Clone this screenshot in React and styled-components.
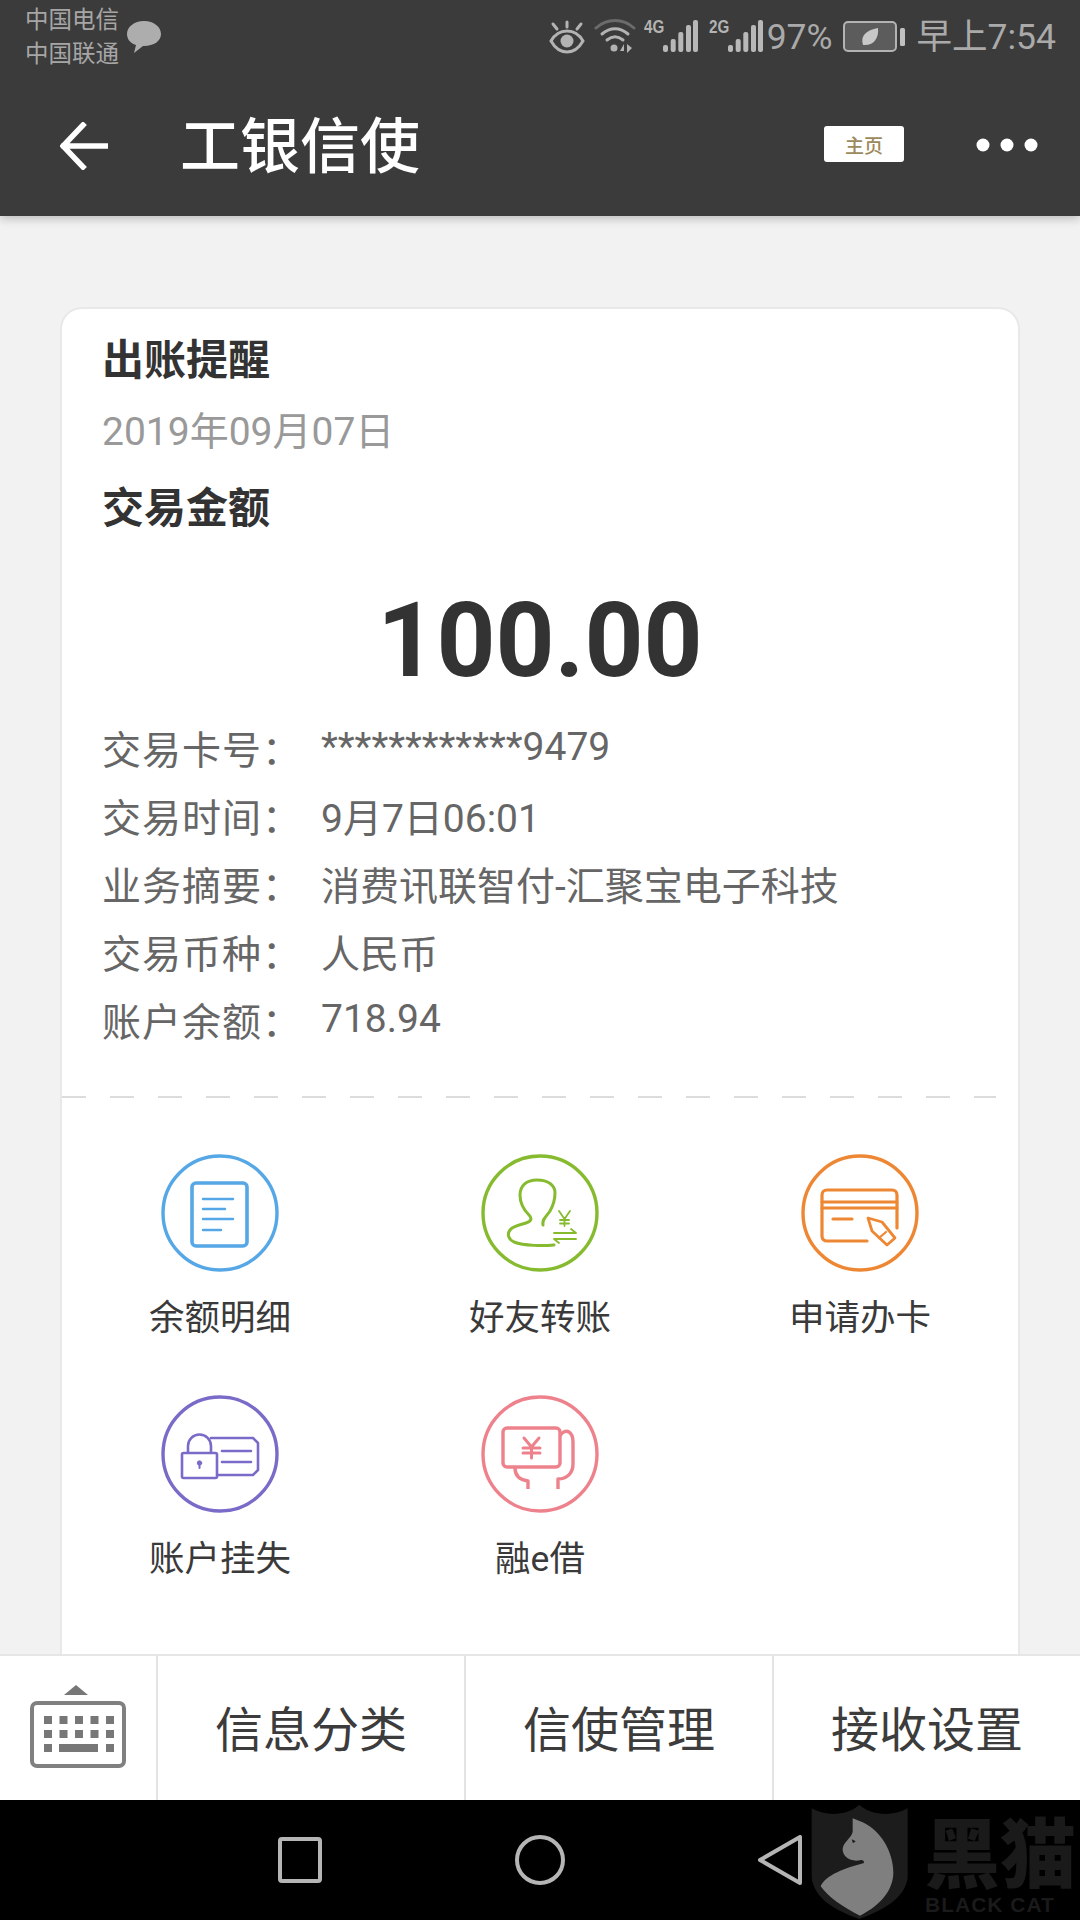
import React from 'react';
import styled, { createGlobalStyle } from 'styled-components';

const FONT = `Roboto, "Noto Sans CJK SC", sans-serif`;

const Global = createGlobalStyle`
  html, body { margin: 0; padding: 0; background: #f2f2f2; }
  * { box-sizing: border-box; }
`;

const Page = styled.div`
  width: 1080px; height: 1920px; display: flex; flex-direction: column;
  overflow: hidden; font-family: ${FONT}; background: #f2f2f2;
`;
const Top = styled.header`
  position: relative; z-index: 2; height: 216px; flex: none; background: #3b3b3b;
  box-shadow: 0 3px 9px rgba(0,0,0,.22);
`;
const StatusBar = styled.div`
  height: 76px; display: flex; align-items: flex-start; padding: 3px 24px 0 25px; color: #a9a9a9;
`;
const Carriers = styled.div`
  display: flex; flex-direction: column; font-size: 23.5px; line-height: 34px; color: #a6a6a6;
`;
const Bubble = styled.svg`
  width: 36px; height: 34px; margin: 17px 0 0 7px; flex: none;
`;
const StatusRight = styled.div`
  margin-left: auto; height: 56px; margin-top: 6px; display: flex; align-items: center;
`;
const StatusIcon = styled.svg`
  display: block; flex: none; margin-right: ${p => p.$gap || 0}px;
`;
const StatusText = styled.span`
  font-size: 35.5px; line-height: 56px; margin-right: ${p => p.$gap || 0}px; color: #aaa; white-space: nowrap;
`;
const Toolbar = styled.div`
  height: 140px; display: flex; align-items: center; padding: 0 42px 0 60px;
`;
const Title = styled.h1`
  margin: 4px 0 0 72px; font-size: 60px; line-height: 80px; font-weight: 500; color: #fff; flex: 1;
`;
const HomeButton = styled.div`
  width: 80px; height: 36px; background: #fff; border-radius: 3px; color: #9c8a5e; font-size: 19px; font-weight: 500;
  display: flex; align-items: center; justify-content: center; margin: 0 72px 4px 0;
`;
const MoreDots = styled.svg`
  display: block; flex: none; margin-bottom: 2px;
`;
const Main = styled.main`
  flex: 1; min-height: 0; overflow: hidden; padding: 91px 61px 0;
`;
const Card = styled.section`
  background: #fff; border: 2px solid #e8e8e8; border-bottom: 0; border-radius: 22px 22px 0 0;
  height: 1400px; margin: 0 -1px;
`;
const CardHead = styled.div`
  padding: 17px 0 0 40px;
`;
const CardTitle = styled.div`
  font-size: 42px; line-height: 70px; font-weight: 700; color: #333; margin-top: ${p => p.$offset || 0}px;
`;
const DateText = styled.div`
  font-size: 39px; line-height: 72px; color: #999;
`;
const Amount = styled.div`
  text-align: center; font-size: 103px; line-height: 145px; font-weight: 700; color: #333; margin-top: 24px;
`;
const Rows = styled.dl`
  margin: 0; padding: 0 0 0 40px;
`;
const Row = styled.div`
  display: grid; grid-template-columns: 219px 1fr; height: 68px; align-items: center;
  font-size: 39px; color: #666;
`;
const Label = styled.dt`
  letter-spacing: 1px;
`;
const Value = styled.dd`
  margin: 0;
`;
const Dashed = styled.svg`
  display: block; width: 954px; height: 4px; margin-top: 42px;
`;
const Grid = styled.div`
  display: grid; grid-template-columns: repeat(3, 1fr); grid-auto-rows: 241px; padding-top: 55px; margin: 0 -2px;
`;
const Item = styled.div`
  display: flex; flex-direction: column; align-items: center;
`;
const ItemIcon = styled.svg`
  width: 118px; height: 118px; display: block;
`;
const ItemLabel = styled.div`
  font-size: 35.5px; line-height: 50px; margin-top: 21px; color: #3a3a3a;
`;
const BottomBar = styled.nav`
  height: 146px; flex: none; background: #fff; border-top: 2px solid #e6e6e6; display: grid;
  grid-template-columns: 158px 308px 308px 306px; position: relative; z-index: 1;
`;
const BarCell = styled.div`
  display: flex; align-items: center; justify-content: center; font-size: 48px; color: #3c3c3c; padding-bottom: 5px;
  border-right: ${p => p.$last ? 0 : '2px solid #e3e3e3'};
`;
const SystemNav = styled.div`
  position: relative; height: 120px; flex: none; background: #000; display: grid;
  grid-template-columns: repeat(3, 240px); justify-content: center; align-items: center; justify-items: center;
`;
const Watermark = styled.div`
  position: absolute; left: 800px; top: 0; width: 280px; height: 120px;
`;
const WatermarkName = styled.div`
  position: absolute; left: 124px; top: 8px; font-size: 76px; line-height: 82px; font-weight: 900;
  color: #1a1a1a; white-space: nowrap;
  font-family: "Noto Sans CJK SC", sans-serif;
`;
const WatermarkSub = styled.div`
  position: absolute; left: 125px; top: 93px; font-size: 21px; line-height: 24px; font-weight: 700;
  color: #1a1a1a; letter-spacing: 1px; white-space: nowrap; font-family: "Liberation Sans", sans-serif;
`;
const SignalLabel = styled.span`
  position: absolute; left: 0; top: 0; font-size: 19px; line-height: 20px; font-weight: 700; color: #b3b3b3;
  font-family: "Liberation Sans", sans-serif; transform: scaleX(.8); transform-origin: left;
`;
const SignalWrap = styled.div`
  position: relative; width: 54px; height: 40px; flex: none; margin-right: ${p => p.$gap}px;
`;

const Icon = ({ color, children }) => (
  <ItemIcon viewBox="0 0 118 118" fill="none" stroke={color} strokeWidth="2.6" strokeLinecap="round" strokeLinejoin="round">
    <circle cx="59" cy="59" r="57" strokeWidth="3.4" />
    {children}
  </ItemIcon>
);

function SignalIcon({ label, gap }) {
  return (
    <SignalWrap $gap={gap}>
      <SignalLabel>{label}</SignalLabel>
      <svg width="54" height="40" viewBox="0 0 54 40" fill="#b8b8b8">
        <rect x="19" y="28" width="5" height="7" rx="2" />
        <rect x="26.7" y="22" width="5" height="13" rx="2" />
        <rect x="34.3" y="15" width="5" height="20" rx="2" />
        <rect x="42" y="8" width="5" height="27" rx="2" />
        <rect x="49" y="3" width="5" height="32" rx="2" />
      </svg>
    </SignalWrap>
  );
}

const rows = [
  ['交易卡号：', '************9479'],
  ['交易时间：', '9月7日06:01'],
  ['业务摘要：', '消费讯联智付-汇聚宝电子科技'],
  ['交易币种：', '人民币'],
  ['账户余额：', '718.94'],
];

const items = [
  ['余额明细', '#55a7e6', (
    <>
      <rect x="31" y="29" width="55" height="63" rx="4" strokeWidth="3.6" />
      <path d="M42 45h30M42 55h22M42 65h30M42 76h18" strokeWidth="2.4" />
    </>
  )],
  ['好友转账', '#86bb2f', (
    <>
      <path d="M62 71c-1-6 3-8 7-14 4-7 5-13 5-18 0-8-7-13-18-13-11 0-17 6-17 15 0 8 4 15 9 20 3 3 3 6-3 8-6 2-13 3-16 7-3 4-2 9 4 12 10 4 30 4 40 3" strokeWidth="3" />
      <path d="M78 57l5.500 8 5.500-8M83.500 65v7M79 66h9M79 69.500h9" strokeWidth="1.8" />
      <path d="M73 79h22l-5-4M95 85H73l5 4" strokeWidth="1.8" />
    </>
  )],
  ['申请办卡', '#ee8733', (
    <>
      <path d="M66 87H26c-3 0-5-2-5-5V41c0-3 2-5 5-5h65c3 0 5 2 5 5v33" strokeWidth="3.2" />
      <path d="M21 48h75M21 54h75" strokeWidth="3" />
      <path d="M32 65h19" strokeWidth="3.2" />
      <path d="M67 64l14 4 13 16-8 7-15-14z" strokeWidth="2.8" />
      <path d="M85 78l-7 6" strokeWidth="2.2" />
    </>
  )],
  ['账户挂失', '#7b6bc9', (
    <>
      <rect x="21" y="58" width="35" height="25" rx="1.5" strokeWidth="2.6" />
      <path d="M27 57V51a11.500 11.500 0 0 1 23 0v6M50 43H92l5 5v27l-5 5H57" strokeWidth="2.6" />
      <path d="M61 56h29M61 67h29" strokeWidth="2.6" />
      <circle cx="38.500" cy="68" r="2.200" fill="#7b6bc9" strokeWidth="1" />
      <path d="M38.500 69v4" strokeWidth="2" />
    </>
  )],
  ['融e借', '#ee828c', (
    <>
      <rect x="22" y="33" width="57" height="39" rx="4" strokeWidth="3.4" />
      <path d="M43 43l7.500 9 7.500-9M50.500 52v11M42 53h17M42 58h17" strokeWidth="3" />
      <path d="M79 41c2-4 6-6 9-4 3 2 4 5 4 10v22c0 9-6 15-15 15v10M34 73c0 8 5 12 13 13v8" strokeWidth="3.4" strokeLinecap="butt" />
    </>
  )],
];

export default function App() {
  return (
    <Page>
      <Global />
      <Top>
        <StatusBar>
          <Carriers>
            <span>中国电信</span>
            <span>中国联通</span>
          </Carriers>
          <Bubble viewBox="0 0 36 34">
            <path d="M18 1C8 1 1 7 1 14c0 5 3 9 9 11l-2 8 9-7h1c10 0 17-5 17-12S28 1 18 1z" fill="#adadad" />
          </Bubble>
          <StatusRight>
            <StatusIcon $gap={8} width="38" height="40" viewBox="0 -2 38 40" fill="none" stroke="#b3b3b3" strokeWidth="3" strokeLinecap="round">
              <path d="M3 22c4-7 9-10 16-10s12 3 16 10c-4 7-9 11-16 11S7 29 3 22z" />
              <circle cx="19" cy="22" r="6.5" fill="#b3b3b3" stroke="none" />
              <path d="M19 3v5M5 5l4 5M33 5l-4 5" />
            </StatusIcon>
            <StatusIcon $gap={8} width="42" height="40" viewBox="0 0 42 40" fill="none" strokeLinecap="round">
              <path d="M2 11C13 1 29 1 40 11" stroke="#6b6b6b" strokeWidth="3" />
              <path d="M8 17c8-7 18-7 26 0M13 23c5-4 11-4 16 0" stroke="#b3b3b3" strokeWidth="3" />
              <circle cx="20" cy="31" r="3.5" fill="#b3b3b3" />
              <path d="M30 27l-4 7h4zM33 27v9l5-5z" fill="#b3b3b3" />
            </StatusIcon>
            <SignalIcon label="4G" gap={11} />
            <SignalIcon label="2G" gap={4} />
            <StatusText $gap={10}>97%</StatusText>
            <StatusIcon $gap={12} width="62" height="32" viewBox="0 0 62 32">
              <rect x="1" y="1" width="52" height="29" rx="4" fill="#5c5c5c" stroke="#b3b3b3" strokeWidth="2" />
              <rect x="57" y="7" width="5" height="18" rx="1.5" fill="#c0c0c0" />
              <path d="M20 24c-3-9 3-15 15-17 1 10-4 18-15 17z" fill="#c8c8c8" />
            </StatusIcon>
            <StatusText>早上7:54</StatusText>
          </StatusRight>
        </StatusBar>
        <Toolbar>
          <svg width="48" height="48" viewBox="0 0 48 48" fill="none" stroke="#fff" strokeWidth="5.5" strokeLinecap="square">
            <path d="M46 24H4M23 3L3 24l20 21" />
          </svg>
          <Title>工银信使</Title>
          <HomeButton>主页</HomeButton>
          <MoreDots width="62" height="16" viewBox="0 0 62 16" fill="#fff">
            <circle cx="7" cy="8" r="6.5" /><circle cx="31" cy="8" r="6.5" /><circle cx="55" cy="8" r="6.5" />
          </MoreDots>
        </Toolbar>
      </Top>
      <Main>
        <Card>
          <CardHead>
            <CardTitle>出账提醒</CardTitle>
            <DateText>2019年09月07日</DateText>
            <CardTitle $offset={6}>交易金额</CardTitle>
          </CardHead>
          <Amount>100.00</Amount>
          <Rows>
            {rows.map(([k, v]) => (
              <Row key={k}><Label>{k}</Label><Value>{v}</Value></Row>
            ))}
          </Rows>
          <Dashed viewBox="0 0 954 4">
            <line x1="0" y1="2" x2="934" y2="2" stroke="#dcdcdc" strokeWidth="2" strokeDasharray="24 24" />
          </Dashed>
          <Grid>
            {items.map(([label, color, art]) => (
              <Item key={label}>
                <Icon color={color}>{art}</Icon>
                <ItemLabel>{label}</ItemLabel>
              </Item>
            ))}
          </Grid>
        </Card>
      </Main>
      <BottomBar>
        <BarCell>
          <svg width="96" height="84" viewBox="0 0 96 84">
            <path d="M34 11L46 1l12 10z" fill="#777" />
            <rect x="2" y="19" width="92" height="63" rx="5" fill="none" stroke="#808080" strokeWidth="4" />
            {[0, 1, 2, 3, 4].map(i => <rect key={i} x={14 + i * 15.5} y="32" width="8" height="8" fill="#777" />)}
            {[0, 1, 2, 3, 4].map(i => <rect key={i} x={14 + i * 15.5} y="46" width="8" height="8" fill="#777" />)}
            <rect x="14" y="60" width="8" height="8" fill="#777" />
            <rect x="29" y="60" width="39" height="8" fill="#777" />
            <rect x="76" y="60" width="8" height="8" fill="#777" />
          </svg>
        </BarCell>
        <BarCell>信息分类</BarCell>
        <BarCell>信使管理</BarCell>
        <BarCell $last>接收设置</BarCell>
      </BottomBar>
      <SystemNav>
        <svg width="44" height="46" viewBox="0 0 44 46" fill="none" stroke="#b5b5b5" strokeWidth="4">
          <rect x="2" y="2" width="40" height="42" rx="2" />
        </svg>
        <svg width="50" height="50" viewBox="0 0 50 50" fill="none" stroke="#b5b5b5" strokeWidth="4">
          <circle cx="25" cy="25" r="23" />
        </svg>
        <svg width="44" height="50" viewBox="0 0 44 50" fill="none" stroke="#b5b5b5" strokeWidth="4" strokeLinejoin="round">
          <path d="M42 2v46L2 25z" />
        </svg>
        <Watermark>
          <svg width="280" height="120" viewBox="0 0 840 360">
            <path d="M35 25c45 25 105 22 143-10 38 32 100 35 145 10v210c-10 60-70 95-145 122C100 330 45 295 35 235z" fill="#1c1c1c" />
            <path d="M158 55l30 12c55 25 92 90 92 150 0 55-40 100-100 130-50-25-95-55-118-88 15-35 75-55 130-70 0-8-5-10-12-8-30 5-50-10-52-30-2-22 25-35 30-55z" fill="#7f7f7f" />
            <path d="M155 118l12 6-8 6z" fill="#1c1c1c" />
          </svg>
          <WatermarkName>黑猫</WatermarkName>
          <WatermarkSub>BLACK CAT</WatermarkSub>
        </Watermark>
      </SystemNav>
    </Page>
  );
}
